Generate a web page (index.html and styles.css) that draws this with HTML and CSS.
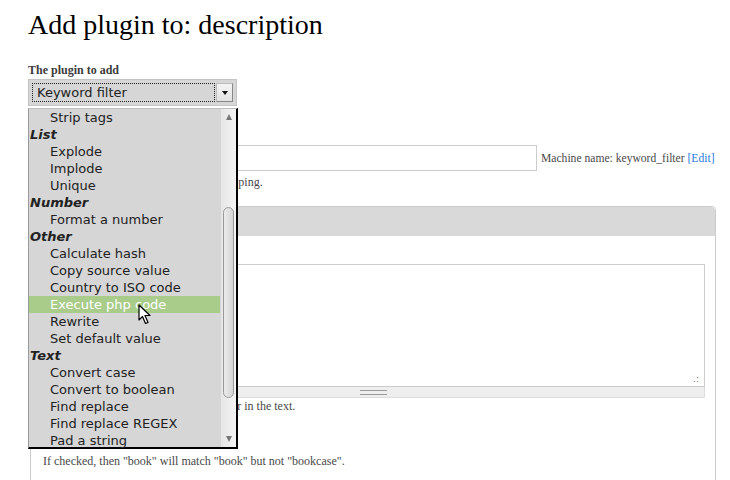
FILE: index.html
```html
<!DOCTYPE html>
<html>
<head>
<meta charset="utf-8">
<link rel="stylesheet" href="styles.css">
</head>
<body>
<div class="page">
  <h1 class="title">Add plugin to: description</h1>
  <div class="field">
    <div class="label">The plugin to add</div>
    <div class="select">
      <div class="select-value">Keyword filter</div>
      <div class="select-btn"><span class="tri-down"></span></div>
    </div>
  </div>
  <div class="field field-name">
    <div class="label">Label</div>
    <div class="name-row">
      <div class="input"></div>
      <div class="machine">Machine name: keyword_filter <a class="edit">[Edit]</a></div>
    </div>
    <div class="desc">A label used to identify this plugin in a mapping.</div>
  </div>
  <div class="fieldset">
    <div class="fs-head">Settings</div>
    <div class="fs-body">
      <div class="label">Words</div>
      <div class="textarea-wrap">
        <div class="textarea"><span class="resize">.:</span></div>
        <div class="grippie"><span class="grip-lines"></span></div>
      </div>
      <div class="desc desc-in">Key words, one per line, that must appear in the text.</div>
      <div class="check-row"><span class="checkbox"></span> Case sensitive</div>
      <div class="desc desc-check">If checked, then "book" will match "book" but not "bookcase".</div>
    </div>
  </div>

  <div class="dropdown">
    <div class="options">
      <div class="opt">Strip tags</div>
      <div class="grp">List</div>
      <div class="opt">Explode</div>
      <div class="opt">Implode</div>
      <div class="opt">Unique</div>
      <div class="grp">Number</div>
      <div class="opt">Format a number</div>
      <div class="grp">Other</div>
      <div class="opt">Calculate hash</div>
      <div class="opt">Copy source value</div>
      <div class="opt">Country to ISO code</div>
      <div class="opt hover">Execute php code</div>
      <div class="opt">Rewrite</div>
      <div class="opt">Set default value</div>
      <div class="grp">Text</div>
      <div class="opt">Convert case</div>
      <div class="opt">Convert to boolean</div>
      <div class="opt">Find replace</div>
      <div class="opt">Find replace REGEX</div>
      <div class="opt">Pad a string</div>
    </div>
    <div class="scrollbar">
      <span class="arrow-up"></span>
      <div class="track"><div class="thumb"></div></div>
      <span class="arrow-down"></span>
    </div>
  </div>
  <svg class="cursor" width="14" height="22" viewBox="0 0 14 22"><path d="M1 1 L1 16 L4.5 12.5 L7.5 19.5 L10 18.5 L7 11.5 L12 11.5 Z" fill="#fff" stroke="#000" stroke-width="1.2" stroke-linejoin="round"/></svg>
</div>
</body>
</html>
```
FILE: styles.css
```css
html, body { margin: 0; padding: 0; background: #fff; }
.page {
  position: relative;
  padding: 0 14px 0 28px;
  font-family: "Liberation Serif", serif;
  color: #333;
  height: 480px;
  overflow: hidden;
  box-sizing: border-box;
}
.title {
  margin: 0;
  padding-top: 8px;
  font-weight: normal;
  font-size: 28px;
  line-height: 34px;
  color: #000;
}
.field { margin-top: 21px; }
.label { font-weight: bold; font-size: 12px; line-height: 14px; color: #3b3b3b; }
.select {
  margin-top: 2px;
  width: 209px;
  height: 27px;
  box-sizing: border-box;
  background: #d6d6d6;
  border: 1px solid #c4c4c4;
  padding: 3px;
  display: flex;
  gap: 1px;
}
.select-value {
  flex: 1;
  border: 1px dotted #222;
  font-family: "DejaVu Sans", sans-serif;
  font-size: 13px;
  line-height: 18px;
  color: #222;
  padding-left: 4px;
}
.select-btn {
  width: 17px;
  background: linear-gradient(#f4f4f4, #e2e2e2);
  border: 1px solid #bbb;
  border-right-color: #888;
  border-bottom-color: #888;
  box-sizing: border-box;
  display: flex;
  align-items: center;
  justify-content: center;
}
.tri-down {
  width: 0; height: 0;
  border-left: 3.5px solid transparent;
  border-right: 3.5px solid transparent;
  border-top: 4px solid #111;
}
.field-name { margin-top: 23px; }
.name-row { display: flex; align-items: center; margin-top: 2px; gap: 4px; }
.input { width: 509px; height: 26px; border: 1px solid #ccc; box-sizing: border-box; }
.machine { font-size: 11.6px; color: #494949; white-space: nowrap; }
.edit { color: #2a7ae2; }
.desc { font-size: 12px; line-height: 14px; color: #494949; margin-top: 4px; }
.fieldset {
  margin-top: 17px;
  margin-left: 2px;
  border: 1px solid #ccc;
  border-radius: 4px 4px 0 0;
  height: 400px;
}
.fs-head {
  background: #d9d9d9;
  height: 29px;
  border-radius: 4px 4px 0 0;
  font-size: 13px;
  line-height: 29px;
  padding-left: 10px;
}
.fs-body { padding: 8px 10px 0 10px; }
.textarea-wrap { margin-top: 6px; }
.textarea {
  height: 123px;
  border: 1px solid #ccc;
  box-sizing: border-box;
  position: relative;
}
.resize { position: absolute; right: 5px; bottom: 2px; font-size: 9px; color: #666; font-family: "DejaVu Sans", sans-serif; }
.grippie {
  height: 10px;
  background: #eee;
  border: 1px solid #ddd;
  border-top: none;
  display: flex;
  justify-content: center;
  align-items: center;
}
.grip-lines { width: 27px; height: 3px; border-top: 1px solid #999; border-bottom: 1px solid #999; }
.desc-in { margin-top: 1px; }
.check-row { font-size: 12px; font-weight: bold; margin-top: 12px; line-height: 14px; }
.checkbox { display: inline-block; width: 11px; height: 11px; border: 1px solid #888; vertical-align: middle; }
.desc-check { margin-left: 2px; margin-top: 14px; }

.dropdown {
  position: absolute;
  left: 28px;
  top: 108px;
  width: 210px;
  height: 341px;
  box-sizing: border-box;
  background: #d6d6d6;
  border-left: 1px solid #9a9a9a;
  border-top: 1px solid #bdbdbd;
  border-right: 2px solid #000;
  border-bottom: 2px solid #000;
  display: flex;
  font-family: "DejaVu Sans", sans-serif;
  font-size: 13px;
  color: #222;
}
.options { flex: 1; padding-top: 0; }
.opt, .grp { height: 17px; line-height: 17px; white-space: nowrap; }
.opt { padding-left: 21px; }
.grp { padding-left: 1px; font-weight: bold; font-style: italic; }
.opt.hover { background: #a9cc8b; color: #fff; margin-right: 1px; }
.scrollbar {
  width: 15px;
  background: linear-gradient(to right, #e6e6e6, #f4f4f4);
  display: flex;
  flex-direction: column;
  align-items: center;
}
.arrow-up, .arrow-down {
  width: 0; height: 0;
  border-left: 3.5px solid transparent;
  border-right: 3.5px solid transparent;
  margin: 6px 0;
}
.arrow-up { border-bottom: 6px solid #777; margin-top: 5px; }
.arrow-down { border-top: 6px solid #777; margin-bottom: 5px; }
.track { flex: 1; width: 100%; display: flex; justify-content: center; }
.thumb {
  margin-top: 81px;
  width: 11px;
  height: 191px;
  box-sizing: border-box;
  border: 1px solid #999;
  border-radius: 6px;
  background: linear-gradient(to right, #ececec, #d4d4d4);
}
.cursor { position: absolute; left: 138px; top: 304px; }
```
